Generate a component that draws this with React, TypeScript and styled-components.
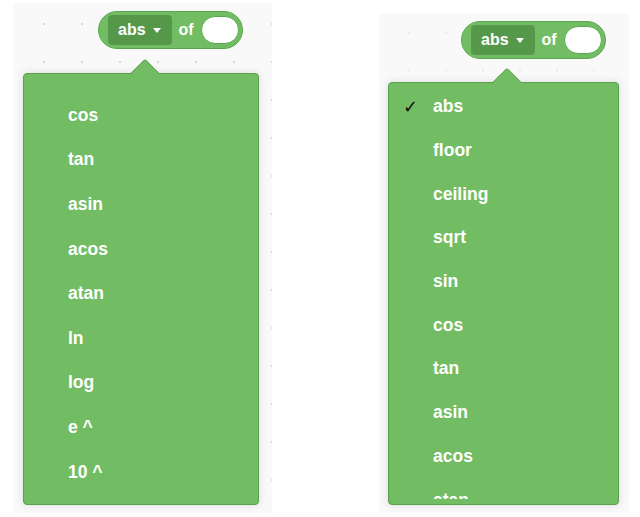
import styled, { createGlobalStyle } from "styled-components";

const GlobalStyle = createGlobalStyle`
  html, body {
    margin: 0;
    padding: 0;
    background: #ffffff;
    font-family: "Liberation Sans", Arial, sans-serif;
  }
`;

interface IPanel {
  top: number;
  width: number;
  height: number;
  inset: number;
  blockLeft: number;
  blockTop: number;
  menuGap: number;
  menuWidth: number;
  menuHeight: number;
  arrowLeft: number;
  listTop: number;
  rowHeight: number;
  dotX: number;
  dotY: number;
  dotStep: number;
  selected?: string;
  items: string[];
}

const panels: IPanel[] = [
  {
    top: 3,
    width: 259,
    height: 510,
    inset: 10,
    blockLeft: 75,
    blockTop: 8,
    menuGap: 24,
    menuWidth: 236,
    menuHeight: 432,
    arrowLeft: 121,
    listTop: 19,
    rowHeight: 44.6,
    dotX: 31,
    dotY: 21,
    dotStep: 38,
    items: ["cos", "tan", "asin", "acos", "atan", "ln", "log", "e ^", "10 ^"],
  },
  {
    top: 14,
    width: 250,
    height: 498,
    inset: 9,
    blockLeft: 73,
    blockTop: 7,
    menuGap: 23,
    menuWidth: 231,
    menuHeight: 423,
    arrowLeft: 118,
    listTop: 2,
    rowHeight: 43.7,
    dotX: 30,
    dotY: 19,
    dotStep: 37,
    selected: "abs",
    items: [
      "abs",
      "floor",
      "ceiling",
      "sqrt",
      "sin",
      "cos",
      "tan",
      "asin",
      "acos",
      "atan",
    ],
  },
];

function App() {
  return (
    <>
      <GlobalStyle />
      <Stage>
        {panels.map((p, i) => (
          <Workspace
            key={i}
            $top={p.top}
            $width={p.width}
            $height={p.height}
            $inset={p.inset}
            $dotX={p.dotX}
            $dotY={p.dotY}
            $dotStep={p.dotStep}
          >
            <Block $left={p.blockLeft} $top={p.blockTop}>
              <Field>
                abs
                <Caret />
              </Field>
              <Label>of</Label>
              <Slot />
            </Block>
            <Menu $gap={p.menuGap} $width={p.menuWidth} $height={p.menuHeight}>
              <Arrow $left={p.arrowLeft} />
              <List $top={p.listTop}>
                {p.items.map((item) => (
                  <Item key={item} $height={p.rowHeight}>
                    <Check>{p.selected === item ? "✓" : ""}</Check>
                    {item}
                  </Item>
                ))}
              </List>
            </Menu>
          </Workspace>
        ))}
      </Stage>
    </>
  );
}

const Stage = styled.div`
  display: flex;
  align-items: flex-start;
  gap: 107px;
  padding-left: 13px;
  width: 640px;
  height: 517px;
  box-sizing: border-box;
  overflow: hidden;
`;

const Workspace = styled.div<{
  $top: number;
  $width: number;
  $height: number;
  $inset: number;
  $dotX: number;
  $dotY: number;
  $dotStep: number;
}>`
  display: flex;
  flex-direction: column;
  flex-shrink: 0;
  margin-top: ${(p) => p.$top}px;
  width: ${(p) => p.$width}px;
  height: ${(p) => p.$height}px;
  padding-left: ${(p) => p.$inset}px;
  box-sizing: border-box;
  background-color: #f9f9f9;
  background-image: radial-gradient(
    circle,
    #d9d9d9 0,
    #d9d9d9 0.8px,
    transparent 1.1px
  );
  background-size: ${(p) => p.$dotStep}px ${(p) => p.$dotStep}px;
  background-position: ${(p) => p.$dotX - p.$dotStep / 2}px
    ${(p) => p.$dotY - p.$dotStep / 2}px;
`;

const Block = styled.div<{ $left: number; $top: number }>`
  display: flex;
  align-items: center;
  align-self: flex-start;
  margin: ${(p) => p.$top}px 0 0 ${(p) => p.$left}px;
  height: 38px;
  padding: 0 3px 0 9px;
  box-sizing: border-box;
  border: 1.5px solid #5aa84c;
  border-radius: 19px;
  background: #72bd63;
`;

const Field = styled.div`
  display: flex;
  align-items: center;
  gap: 7px;
  height: 30px;
  padding: 0 11px 0 10px;
  border-radius: 4px;
  background: #56984a;
  color: #ffffff;
  font-size: 16px;
  font-weight: 700;
`;

const Caret = styled.span`
  width: 0;
  height: 0;
  border-left: 4.5px solid transparent;
  border-right: 4.5px solid transparent;
  border-top: 5px solid #ffffff;
  margin-top: 1px;
`;

const Label = styled.span`
  margin: 0 7px 0 7px;
  color: #ffffff;
  font-size: 16px;
  font-weight: 700;
`;

const Slot = styled.div`
  width: 38px;
  height: 28px;
  border-radius: 14px;
  background: #ffffff;
  border: 1px solid #5aa84c;
  box-sizing: border-box;
`;

const Menu = styled.div<{ $gap: number; $width: number; $height: number }>`
  position: relative;
  margin-top: ${(p) => p.$gap}px;
  width: ${(p) => p.$width}px;
  height: ${(p) => p.$height}px;
  padding-bottom: 5px;
  box-sizing: border-box;
  border: 1px solid #5c9f4e;
  border-radius: 4px;
  background: #72bd63;
  box-shadow: 0 0 8px rgba(0, 0, 0, 0.12);
`;

const Arrow = styled.div<{ $left: number }>`
  position: absolute;
  top: -11px;
  left: ${(p) => p.$left - 11}px;
  width: 21px;
  height: 21px;
  background: #72bd63;
  border-top: 1px solid #5c9f4e;
  border-left: 1px solid #5c9f4e;
  border-top-left-radius: 3px;
  transform: rotate(45deg);
`;

const List = styled.div<{ $top: number }>`
  position: relative;
  height: 100%;
  padding-top: ${(p) => p.$top}px;
  box-sizing: border-box;
  overflow: hidden;
`;

const Item = styled.div<{ $height: number }>`
  display: flex;
  align-items: center;
  height: ${(p) => p.$height}px;
  color: #ffffff;
  font-size: 17.5px;
  font-weight: 700;
`;

const Check = styled.span`
  width: 44px;
  padding-left: 14px;
  box-sizing: border-box;
  color: #111111;
  font-family: "DejaVu Sans", sans-serif;
  font-size: 18px;
  font-weight: 400;
`;

export default App;
